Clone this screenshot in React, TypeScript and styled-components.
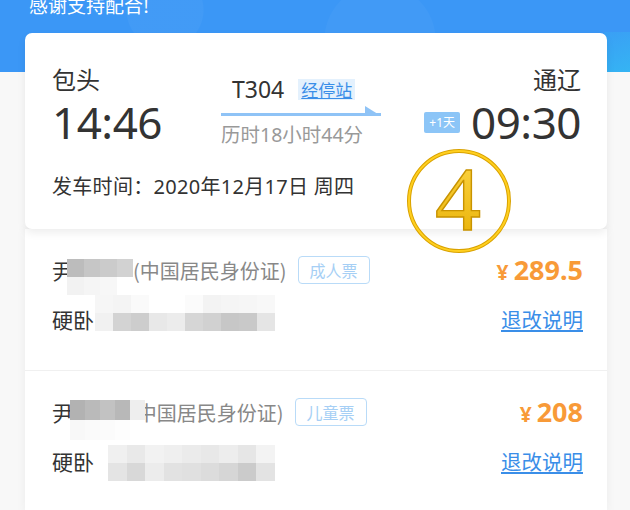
import styled, { createGlobalStyle } from "styled-components";

// 기본 스타일
const GlobalStyle = createGlobalStyle`
  html, body { margin: 0; padding: 0; background: #f8f8f8; }
  body { font-family: "Noto Sans", "Noto Sans CJK SC", sans-serif; }
`;

const Page = styled.div`
  position: relative;
  width: 630px;
  height: 510px;
  overflow: hidden;
  background:
    radial-gradient(circle at 165px 10px, rgba(255,255,255,0.035) 0 38px, transparent 39px),
    radial-gradient(circle at 380px 40px, rgba(255,255,255,0.03) 0 55px, transparent 56px),
    linear-gradient(#3b97f6 0, #3b97f6 72px, #f8f8f8 72px);
`;

const Header = styled.div`
  height: 24px;
  margin-top: -7px;
  padding-left: 29px;
  color: #ffffff;
  font-size: 19px;
  line-height: 24px;
  font-family: "Noto Sans CJK SC", sans-serif;
`;

const SideGlow = styled.div`
  position: absolute;
  right: 0;
  top: 32px;
  width: 26px;
  height: 40px;
  background: linear-gradient(160deg, #3a9ff5, #35b4f3);
`;

const Sheet = styled.div`
  position: relative;
  margin: 16px 23px 0 25px;
`;

// 상단 열차 정보 카드
const Card = styled.div`
  position: relative;
  z-index: 1;
  background: #ffffff;
  border-radius: 7px;
  box-shadow: 0 4px 8px rgba(0, 0, 0, 0.07);
  padding: 31px 26px 28px 27px;
  color: #333333;
`;

const TopRow = styled.div`
  display: flex;
  align-items: flex-start;
`;

const Side = styled.div<{ $right?: boolean }>`
  display: flex;
  flex-direction: column;
  align-items: ${(p) => (p.$right ? "flex-end" : "flex-start")};
  ${(p) => (p.$right ? "flex: 1;" : "width: 169px;")}
`;

const Station = styled.div`
  font-size: 24px;
  line-height: 30px;
  font-family: "Noto Sans CJK SC", sans-serif;
`;

const Clock = styled.div`
  margin-top: 4px;
  font-size: 44px;
  line-height: 48px;
  font-family: "Noto Sans", sans-serif;
  letter-spacing: -0.5px;
`;

const ClockRow = styled.div`
  display: flex;
  align-items: center;
  gap: 11px;
`;

const DayBadge = styled.span`
  margin-top: 4px;
  padding: 0 5px;
  height: 21px;
  line-height: 21px;
  border-radius: 2px;
  background: #8cc5f7;
  color: #ffffff;
  font-size: 12px;
`;

const Middle = styled.div`
  width: 160px;
  display: flex;
  flex-direction: column;
  margin-top: 12px;
`;

const TrainRow = styled.div`
  display: flex;
  align-items: center;
  padding-left: 11px;
  gap: 14px;
`;

const TrainNo = styled.span`
  font-size: 23px;
  line-height: 26px;
`;

const StopsLink = styled.span`
  padding: 0 3px;
  background: #e4f1fd;
  color: #3a8ee8;
  font-size: 17px;
  line-height: 21px;
  text-decoration: underline;
  font-family: "Noto Sans CJK SC", sans-serif;
`;

const Arrow = styled.svg`
  display: block;
  margin-top: 4px;
`;

const Duration = styled.div`
  margin-top: 6px;
  color: #999999;
  font-size: 19.5px;
  line-height: 24px;
`;

const DepartLine = styled.div`
  margin-top: 26px;
  font-size: 20px;
  line-height: 28px;
  letter-spacing: 0.3px;
`;

// 하단 승객/좌석 목록
const List = styled.div`
  background: #ffffff;
  box-shadow: 0 0 10px rgba(0, 0, 0, 0.05);
`;

const Ticket = styled.div`
  display: flex;
  justify-content: space-between;
  padding: 26px 24px 36px 27px;
  height: 79px;
  border-bottom: 1px solid #f0f0f0;
`;

const Col = styled.div<{ $right?: boolean }>`
  display: flex;
  flex-direction: column;
  gap: 19px;
  align-items: ${(p) => (p.$right ? "flex-end" : "flex-start")};
`;

const Line = styled.div`
  display: flex;
  align-items: center;
  height: 30px;
  font-size: 21px;
  color: #333333;
  font-family: "Noto Sans CJK SC", sans-serif;
`;

const IdType = styled.span`
  color: #888888;
  font-size: 20px;
`;

const KindBadge = styled.span`
  margin-left: 11px;
  padding: 0 11px;
  height: 26px;
  line-height: 26px;
  border: 1.5px solid #b9dbf8;
  border-radius: 4px;
  color: #a6cff5;
  font-size: 16px;
`;

const Price = styled.div`
  display: flex;
  align-items: baseline;
  gap: 5px;
  height: 30px;
  color: #f89a38;
  font-weight: 700;
  font-family: "Noto Sans", sans-serif;
`;

const Yen = styled.span`
  font-size: 21px;
`;

const Amount = styled.span`
  font-size: 27px;
  line-height: 30px;
`;

const RuleLink = styled.span`
  color: #3a8ee8;
  font-size: 20.5px;
  line-height: 30px;
  text-decoration: underline;
  font-family: "Noto Sans CJK SC", sans-serif;
`;

const Mosaic = styled.div<{ $cols: number; $cell: number; $rh: number; $ml: number; $mr: number; $mt: number }>`
  position: relative;
  z-index: 1;
  display: grid;
  grid-template-columns: repeat(${(p) => p.$cols}, ${(p) => p.$cell}px);
  grid-auto-rows: ${(p) => p.$rh}px;
  margin: ${(p) => p.$mt}px ${(p) => p.$mr}px 0 ${(p) => p.$ml}px;
`;

const Cell = styled.div<{ $c: string }>`
  background: ${(p) => p.$c};
`;

const Marker = styled.svg`
  position: absolute;
  z-index: 2;
  left: 381px;
  top: 115px;
  font-family: "Liberation Serif", serif;
`;

type Blur = { rows: string[][]; cell: number; rh: number; ml: number; mr: number; mt: number };

const Pixelated = ({ rows, cell, rh, ml, mr, mt }: Blur) => (
  <Mosaic $cols={rows[0].length} $cell={cell} $rh={rh} $ml={ml} $mr={mr} $mt={mt}>
    {rows.flat().map((c, i) => (
      <Cell key={i} $c={c} />
    ))}
  </Mosaic>
);

const tickets = [
  {
    kind: "成人票",
    price: "289.5",
    name: {
      rows: [
        ["#bcbcbc", "#c6c6c6", "#cbcbcb", "#d2d2d2"],
        ["#f2f2f2", "#f5f5f5", "#f7f7f7", "#ffffff"],
      ],
      cell: 16.5,
      rh: 18,
      ml: -6,
      mr: 0,
      mt: 14,
    },
    seat: {
      rows: [
        ["#f6f6f6", "#f4f4f4", "#fafafa", "#ffffff", "#ffffff", "#fbfbfb", "#f3f3f3", "#f5f5f5", "#f6f6f6", "#f8f8f8"],
        ["#f1f1f1", "#d3d3d3", "#cdcdcd", "#e8e8e8", "#ececec", "#d6d6d6", "#d1d1d1", "#c7c7c7", "#c9c9c9", "#e5e5e5"],
      ],
      cell: 18,
      rh: 18,
      ml: 1,
      mr: 0,
      mt: -12,
    },
  },
  {
    kind: "儿童票",
    price: "208",
    name: {
      rows: [
        ["#b2b2b2", "#bababa", "#c2c2c2", "#b8b8b8", "#eeeeee"],
        ["#f8f8f8", "#fafafa", "#fbfbfb", "#fdfdfd", "#ffffff"],
      ],
      cell: 15,
      rh: 20,
      ml: -3,
      mr: -15,
      mt: 16,
    },
    seat: {
      rows: [
        ["#f0f0f0", "#e9e9e9", "#f2f2f2", "#efefef", "#ebebeb", "#e8e8e8", "#ededed", "#e6e6e6", "#f3f3f3"],
        ["#e4e4e4", "#d8d8d8", "#ececec", "#e2e2e2", "#e0e0e0", "#dcdcdc", "#d6d6d6", "#cbcbcb", "#e3e3e3"],
      ],
      cell: 18.5,
      rh: 18,
      ml: 14,
      mr: 0,
      mt: 4,
    },
  },
];

export default function App() {
  return (
    <Page>
      <GlobalStyle />
      <SideGlow />
      <Header>感谢支持配合!</Header>
      <Sheet>
        <Card>
          <TopRow>
            <Side>
              <Station>包头</Station>
              <Clock>14:46</Clock>
            </Side>
            <Middle>
              <TrainRow>
                <TrainNo>T304</TrainNo>
                <StopsLink>经停站</StopsLink>
              </TrainRow>
              <Arrow width="160" height="11" viewBox="0 0 160 11">
                <rect x="0" y="7" width="160" height="3" fill="#8fc3f6" />
                <polygon points="144,0 160,10 144,10" fill="#8fc3f6" />
              </Arrow>
              <Duration>历时18小时44分</Duration>
            </Middle>
            <Side $right>
              <Station>通辽</Station>
              <ClockRow>
                <DayBadge>+1天</DayBadge>
                <Clock>09:30</Clock>
              </ClockRow>
            </Side>
          </TopRow>
          <DepartLine>发车时间：2020年12月17日 周四</DepartLine>
        </Card>

        <List>
          {tickets.map((t) => (
            <Ticket key={t.kind}>
              <Col>
                <Line>
                  尹
                  <Pixelated {...t.name} />
                  <IdType>(中国居民身份证)</IdType>
                  <KindBadge>{t.kind}</KindBadge>
                </Line>
                <Line>
                  硬卧
                  <Pixelated {...t.seat} />
                </Line>
              </Col>
              <Col $right>
                <Price>
                  <Yen>¥</Yen>
                  <Amount>{t.price}</Amount>
                </Price>
                <RuleLink>退改说明</RuleLink>
              </Col>
            </Ticket>
          ))}
        </List>

        <Marker width="106" height="106" viewBox="0 0 106 106">
          <defs>
            <linearGradient id="gold" x1="0" y1="0" x2="0" y2="1">
              <stop offset="0" stopColor="#ffd84a" />
              <stop offset="1" stopColor="#e6ae00" />
            </linearGradient>
          </defs>
          <circle cx="53" cy="53" r="50" fill="none" stroke="#d9a200" strokeWidth="4" />
          <circle cx="53" cy="53" r="50" fill="none" stroke="#ffcf1f" strokeWidth="2" />
          <text x="52" y="82" textAnchor="middle" fontSize="92" fill="url(#gold)" stroke="#c89300" strokeWidth="1.4">
            4
          </text>
        </Marker>
      </Sheet>
    </Page>
  );
}
